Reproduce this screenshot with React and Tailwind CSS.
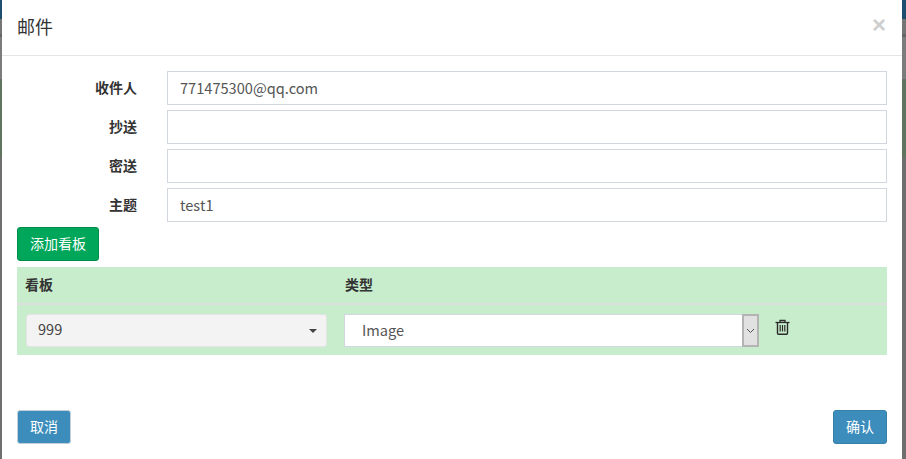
import React from "react";

function Strip({ className }) {
  return (
    <div className={`flex flex-col shrink-0 ${className}`}>
      <div className="h-[19px] bg-[#1d4e6f]" />
      <div className="h-[15px] bg-[#757575]" />
      <div className="h-[3px] bg-[#666666]" />
      <div className="h-[42px] bg-[#7c7c7c]" />
      <div className="h-[79px] bg-[#61745f]" />
      <div className="flex-1 bg-[#6f6f6f]" />
    </div>
  );
}

function Row({ label, value }) {
  return (
    <div className="flex items-center h-[34px] mb-[5px]">
      <label className="w-[120px] ml-[15px] pb-[2px] text-right text-[14px] font-bold text-[#333333]">{label}</label>
      <div className="ml-[30px] w-[720px] h-[34px] border border-[#d2d6de] bg-white pl-[12px] flex items-center text-[14.6px] text-[#555555]">
        <span className="-mt-[1px]">{value}</span>
      </div>
    </div>
  );
}

export default function App() {
  return (
    <div className="flex w-[906px] h-[459px] overflow-hidden bg-white font-['Noto_Sans_CJK_SC','Noto_Sans',sans-serif]">
      <Strip className="w-[2px]" />
      <div className="w-[900px] h-[459px] bg-white flex flex-col">
        <div className="h-[56px] shrink-0 border-b border-[#e5e5e5] flex items-center justify-between pl-[15px] pr-[15px]">
          <h4 className="text-[18px] text-[#333333] leading-[20px] -mt-[3px]">邮件</h4>
          <span className="text-[24px] font-bold leading-none text-[#cfcfcf] font-['Liberation_Sans',sans-serif] -mt-[5px] mr-[1px]">×</span>
        </div>
        <div className="pt-[15px] pr-[15px] pl-[15px] flex-1 flex flex-col">
          <div className="-ml-[15px]">
            <Row label="收件人" value="771475300@qq.com" />
            <Row label="抄送" value="" />
            <Row label="密送" value="" />
            <Row label="主题" value="test1" />
          </div>
          <button className="w-[82px] h-[34px] pb-[2px] rounded-[3px] border border-[#008d4c] bg-[#00a65a] text-white text-[14px]">添加看板</button>
          <div className="mt-[6px] h-[88px] bg-[#c8edcd] w-[870px]">
            <div className="h-[38px] border-b-2 border-[#dddddd] flex items-center pb-[2px] text-[14px] font-bold text-[#333333]">
              <div className="ml-[8px] w-[320px]">看板</div>
              <div>类型</div>
            </div>
            <div className="flex items-start pt-[9px] pl-[9px]">
              <div className="w-[301px] h-[33px] rounded-[3px] border border-[#e4e4e4] bg-[#f3f3f3] flex items-center justify-between pl-[11px] pr-[9px] text-[14.6px] text-[#444444]">
                <span className="-mt-[3px]">999</span>
                <span className="w-0 h-0 border-x-[4px] border-x-transparent border-t-[4px] border-t-[#444444]" />
              </div>
              <div className="ml-[17px] w-[415px] h-[33px] border border-[#d2d6de] bg-white flex items-center justify-between pl-[17px] text-[14.6px] text-[#555555]">
                <span className="-mt-[2px]">Image</span>
                <span className="w-[17px] h-[33px] -mr-[1px] border-2 border-[#b4b4b4] bg-[#e1e1e1] flex items-center justify-center">
                  <svg width="9" height="6" viewBox="0 0 9 6" fill="none" stroke="#555555" strokeWidth="1">
                    <path d="M1 1l3.5 3.5L8 1" />
                  </svg>
                </span>
              </div>
              <svg className="ml-[16px] mt-[5px]" width="15" height="16" viewBox="0 0 15 16" fill="none" stroke="#2b2b2b">
                <path d="M0.5 3.5h14" strokeWidth="1.3" />
                <path d="M5 3V1.5h5V3" strokeWidth="1.3" />
                <path d="M2.5 3.5v10.8q0 .9.9.9h8.2q.9 0 .9-.9V3.5" strokeWidth="1.4" />
                <path d="M5.2 6v6.5M7.5 6v6.5M9.8 6v6.5" strokeWidth="1.2" />
              </svg>
            </div>
          </div>
          <div className="mt-[55px] flex justify-between items-start w-[870px]">
            <button className="w-[54px] h-[34px] pb-[2px] rounded-[3px] border border-[#c3cfd9] bg-[#3c8dbc] text-white text-[14px]">取消</button>
            <button className="w-[54px] h-[34px] pb-[2px] rounded-[3px] border border-[#367fa9] bg-[#3c8dbc] text-white text-[14px]">确认</button>
          </div>
        </div>
      </div>
      <Strip className="w-[4px]" />
    </div>
  );
}
